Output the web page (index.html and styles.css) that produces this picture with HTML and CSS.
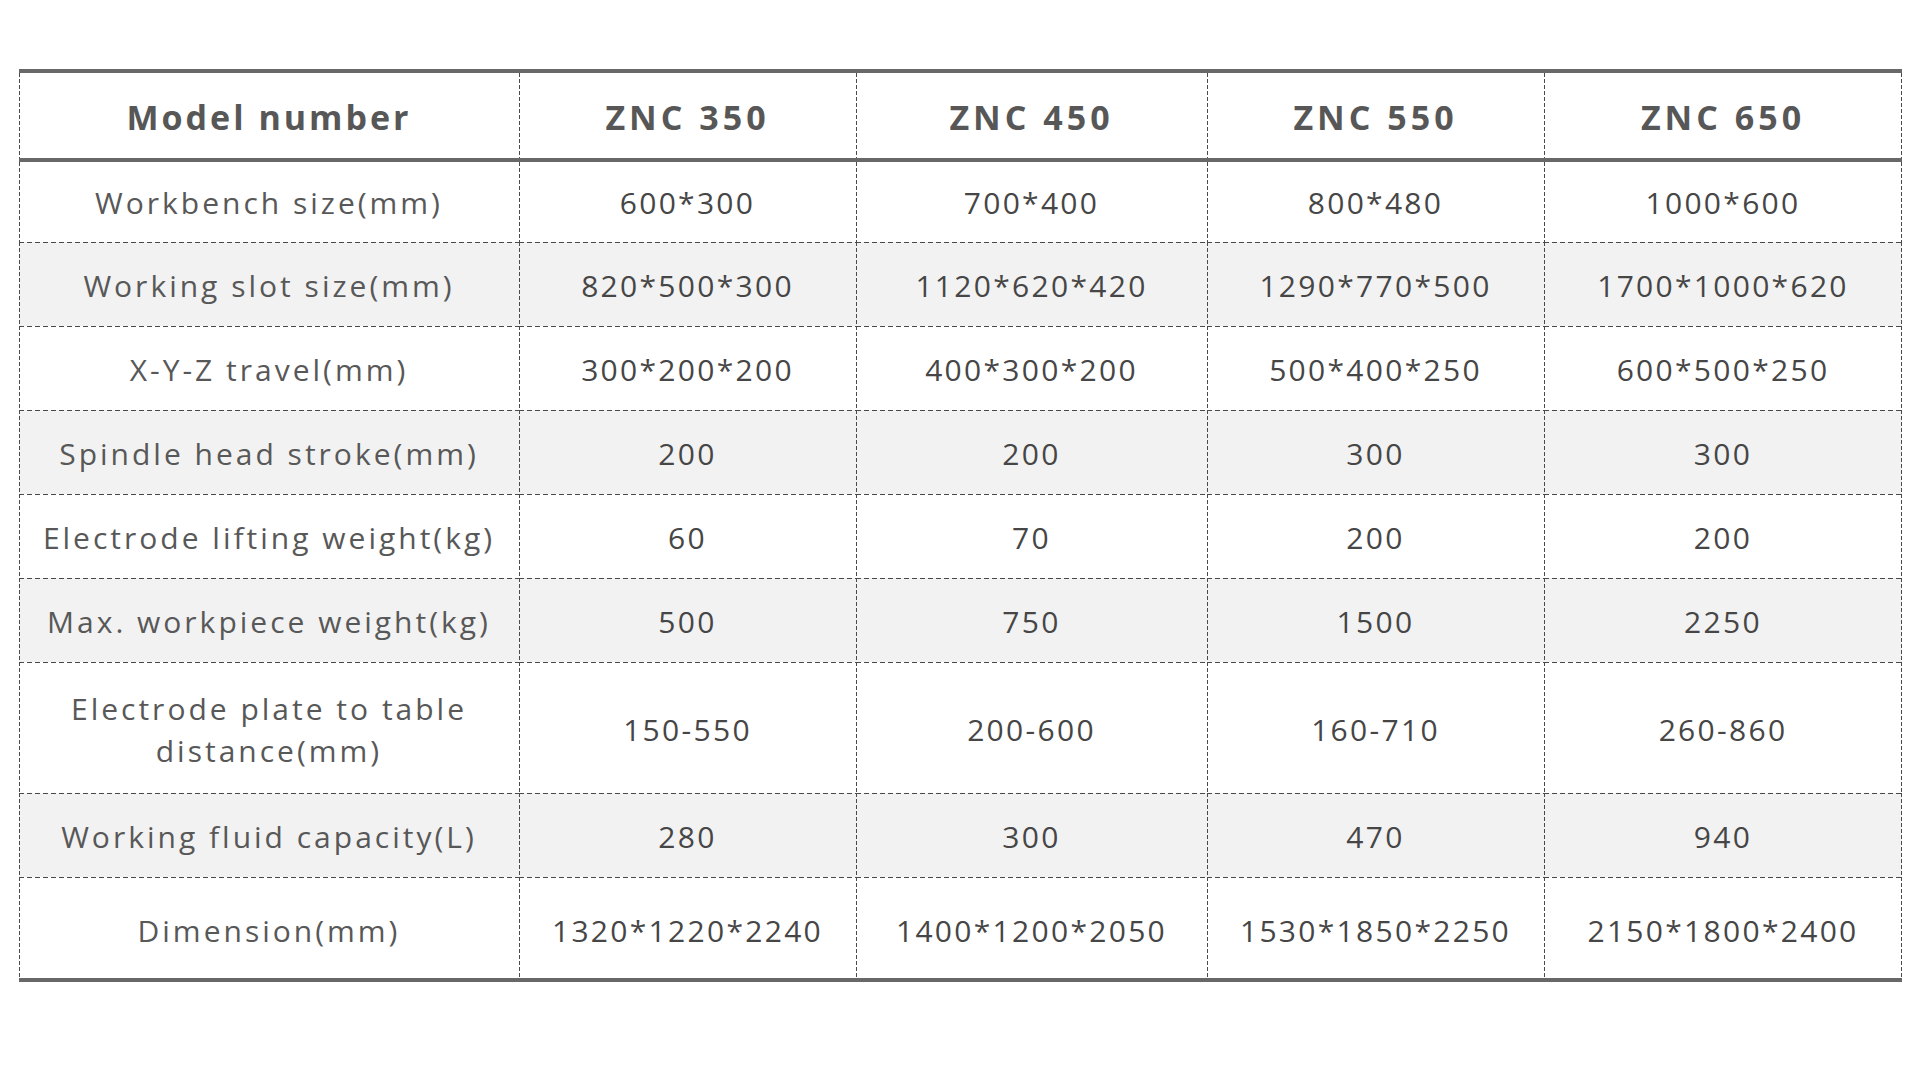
FILE: index.html
```html
<!DOCTYPE html>
<html lang="en">
<head>
<meta charset="utf-8">
<title>ZNC Specifications</title>
<link rel="stylesheet" href="styles.css">
</head>
<body>
<div class="page">
  <table class="spec">
    <colgroup>
      <col class="c-label">
      <col class="c-a">
      <col class="c-b">
      <col class="c-c">
      <col class="c-d">
    </colgroup>
    <thead>
      <tr class="head">
        <th class="label">Model number</th>
        <th>ZNC 350</th>
        <th>ZNC 450</th>
        <th>ZNC 550</th>
        <th class="end">ZNC 650</th>
      </tr>
    </thead>
    <tbody>
      <tr class="first">
        <td class="label">Workbench size(mm)</td>
        <td>600*300</td><td>700*400</td><td>800*480</td><td class="end">1000*600</td>
      </tr>
      <tr class="alt">
        <td class="label">Working slot size(mm)</td>
        <td>820*500*300</td><td>1120*620*420</td><td>1290*770*500</td><td class="end">1700*1000*620</td>
      </tr>
      <tr>
        <td class="label">X-Y-Z travel(mm)</td>
        <td>300*200*200</td><td>400*300*200</td><td>500*400*250</td><td class="end">600*500*250</td>
      </tr>
      <tr class="alt">
        <td class="label">Spindle head stroke(mm)</td>
        <td>200</td><td>200</td><td>300</td><td class="end">300</td>
      </tr>
      <tr>
        <td class="label">Electrode lifting weight(kg)</td>
        <td>60</td><td>70</td><td>200</td><td class="end">200</td>
      </tr>
      <tr class="alt">
        <td class="label">Max. workpiece weight(kg)</td>
        <td>500</td><td>750</td><td>1500</td><td class="end">2250</td>
      </tr>
      <tr class="tall">
        <td class="label">Electrode plate to table<br>distance(mm)</td>
        <td>150-550</td><td>200-600</td><td>160-710</td><td class="end">260-860</td>
      </tr>
      <tr class="alt">
        <td class="label">Working fluid capacity(L)</td>
        <td>280</td><td>300</td><td>470</td><td class="end">940</td>
      </tr>
      <tr class="last">
        <td class="label">Dimension(mm)</td>
        <td>1320*1220*2240</td><td>1400*1200*2050</td><td>1530*1850*2250</td><td class="end">2150*1800*2400</td>
      </tr>
    </tbody>
  </table>
</div>
</body>
</html>
```

FILE: styles.css
```css
html, body {
  margin: 0;
  padding: 0;
  background: #ffffff;
}

.page {
  padding: 69px 0 0 19px;
}

.spec {
  border-collapse: separate;
  border-spacing: 0;
  table-layout: fixed;
  width: 1883px;
  font-family: "Open Sans", "Noto Sans", sans-serif;
  color: #464646;
}

.c-label { width: 500px; }
.c-a { width: 337px; }
.c-b { width: 351px; }
.c-c { width: 337px; }
.c-d { width: 358px; }

/* dashed grid lines drawn as background layers: left edge + top edge */
.spec th,
.spec td {
  border: 0;
  padding: 4px 0 0 0;
  text-align: center;
  vertical-align: middle;
  background-color: #ffffff;
  background-image:
    repeating-linear-gradient(to bottom, #4a4a4a 0 4px, transparent 4px 6px),
    repeating-linear-gradient(to right, #4a4a4a 0 5px, transparent 5px 8px);
  background-size: 1px 100%, 100% 1px;
  background-position: left top, left top;
  background-repeat: no-repeat;
}

.spec th.end,
.spec td.end {
  background-image:
    repeating-linear-gradient(to bottom, #4a4a4a 0 4px, transparent 4px 6px),
    repeating-linear-gradient(to right, #4a4a4a 0 5px, transparent 5px 8px),
    repeating-linear-gradient(to bottom, #4a4a4a 0 4px, transparent 4px 6px);
  background-size: 1px 100%, 100% 1px, 1px 100%;
  background-position: left top, left top, right top;
  background-repeat: no-repeat;
}

/* header and first body row have no dashed top edge (thick rule instead) */
.spec th,
.spec tr.first td {
  background-size: 1px 100%, 0 0;
}
.spec th.end,
.spec tr.first td.end {
  background-size: 1px 100%, 0 0, 1px 100%;
}

.spec th {
  font-size: 34px;
  font-weight: 700;
  letter-spacing: 4px;
  color: #575757;
  border-top: 4px solid #686868;
  border-bottom: 4px solid #686868;
  padding-top: 2px;
}

.spec th.label {
  letter-spacing: 3px;
}

.spec tr.head { height: 93px; }

.spec td {
  font-size: 30px;
  letter-spacing: 2.3px;
  line-height: 42px;
}

.spec tr.first td {
  padding-top: 2px;
}

.spec td.label {
  color: #585858;
  letter-spacing: 3px;
}

.spec tbody tr { height: 84px; }
.spec tbody tr.first { height: 80px; }
.spec tbody tr.tall { height: 131px; }
.spec tbody tr.last { height: 105px; }

.spec tr.alt td {
  background-color: #f2f2f2;
}

.spec tr.last td {
  border-bottom: 4px solid #686868;
  padding-top: 6px;
}
```
